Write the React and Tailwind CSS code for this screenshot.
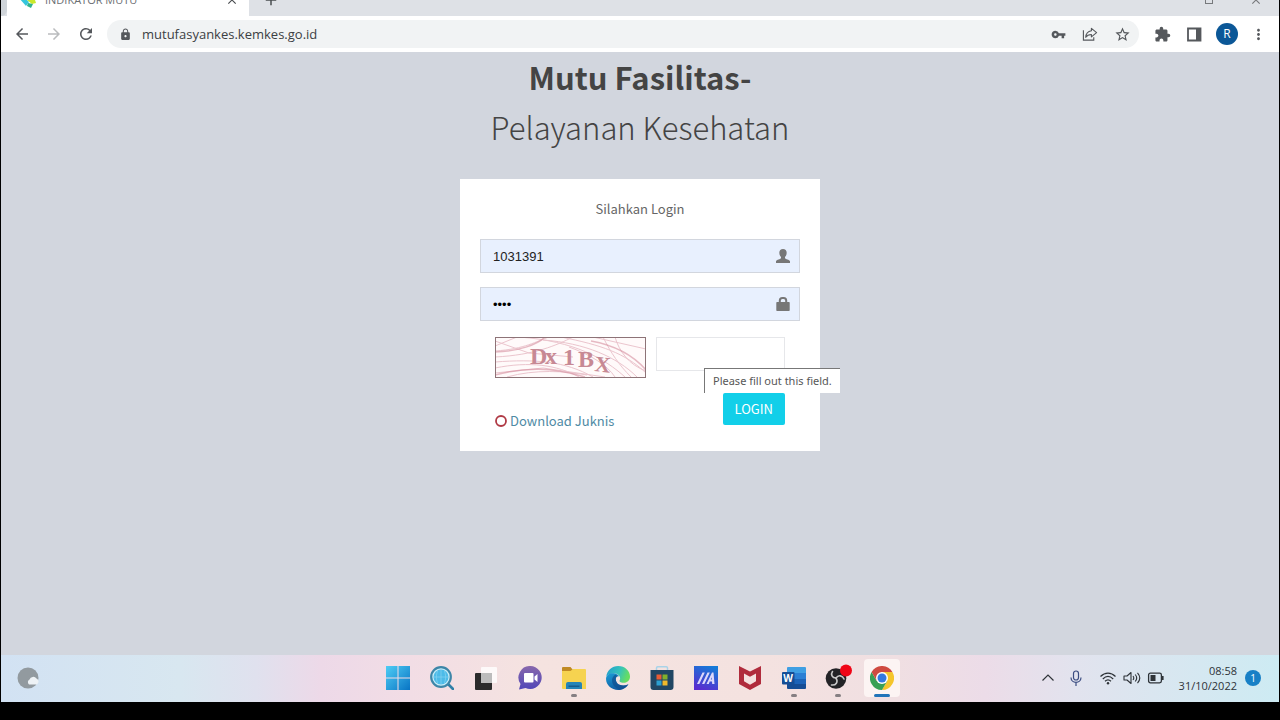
import React from "react";
import {
  MdAdd,
  MdArrowBack,
  MdArrowForward,
  MdClose,
  MdExtension,
  MdLock,
  MdMoreVert,
  MdRefresh,
  MdStarBorder,
  MdVpnKey,
} from "react-icons/md";

const TabStrip = () => (
  <div className="flex h-4 items-end overflow-hidden bg-[#dee1e6] font-['Open_Sans',sans-serif]">
    <div className="h-4 w-1.5 shrink-0 rounded-br-md bg-[#cfd4d9]" />
    <div className="flex h-8 w-[242px] shrink-0 items-center bg-white pl-3 pr-2.5">
      <svg width="18" height="18" viewBox="0 0 18 18" className="shrink-0">
        <path d="M0 7h6l4 4-3 4z" fill="#35c6dc" />
        <path d="M6 3l7-1 4 6-6 2z" fill="#7ed957" />
        <path d="M8 9h8l1 3-4 1z" fill="#c9e82a" />
        <path d="M9 12l5 1-2 4-4-2z" fill="#2fb38d" />
      </svg>
      <span className="ml-2 flex-1 text-[11px] text-[#6b6f73]">INDIKATOR MUTU</span>
      <button aria-label="Close tab" className="text-[#4a4d50]">
        <MdClose size={14} />
      </button>
    </div>
    <button aria-label="New tab" className="flex h-8 w-11 items-center justify-center text-[#4a4d50]">
      <MdAdd size={18} />
    </button>
    <div className="ml-auto flex h-8 items-center gap-9 pr-4 text-[#77797c]">
      <button aria-label="Maximize" className="size-2 border border-current" />
      <button aria-label="Close window">
        <MdClose size={14} />
      </button>
    </div>
  </div>
);

const Toolbar = () => (
  <div className="flex h-9 items-center bg-white px-3 text-[#55585c]">
    <div className="flex items-center gap-3.5">
      <button aria-label="Back"><MdArrowBack size={18} /></button>
      <button aria-label="Forward" className="text-[#babcbe]"><MdArrowForward size={18} /></button>
      <button aria-label="Reload"><MdRefresh size={18} /></button>
    </div>
    <div className="ml-3 flex h-7 flex-1 items-center rounded-full bg-[#f1f3f4] pl-3 pr-2">
      <MdLock size={13} className="shrink-0" />
      <input
        aria-label="Address"
        defaultValue="mutufasyankes.kemkes.go.id"
        className="ml-2.5 min-w-0 flex-1 bg-transparent pt-px font-['Open_Sans',sans-serif] text-[13px] text-[#3c4043] outline-none"
      />
      <div className="flex items-center gap-4">
        <button aria-label="Passwords"><MdVpnKey size={15} /></button>
        <button aria-label="Share">
          <svg width="16" height="16" viewBox="0 0 17 17" fill="none" stroke="currentColor" strokeWidth="1.2">
            <path d="M1.500 4.500v10.500h11v-3" />
            <path d="M10 2.500l5.500 4.500-5.500 4.500V9C7 9 5.200 10 4 12c.2-4 2.300-6.500 6-7z" strokeLinejoin="round" />
          </svg>
        </button>
        <button aria-label="Bookmark"><MdStarBorder size={17} /></button>
      </div>
    </div>
    <div className="ml-[15px] flex items-center gap-4">
      <button aria-label="Extensions"><MdExtension size={17} /></button>
      <button aria-label="Side panel">
        <svg width="15" height="15" viewBox="0 0 15 15">
          <path d="M1 1.500h12.500v12H1z" fill="none" stroke="currentColor" strokeWidth="1.800" />
          <path d="M9 1h5v13H9z" fill="currentColor" />
        </svg>
      </button>
      <button className="-ml-0.5 flex size-[22px] items-center justify-center rounded-full bg-[#0b5797] font-['Open_Sans',sans-serif] text-xs text-white">
        R
      </button>
    </div>
    <button aria-label="Menu" className="ml-3"><MdMoreVert size={17} /></button>
  </div>
);

const UserGlyph = () => (
  <svg width="14" height="14" viewBox="0 0 14 14" fill="#777">
    <path d="M7 0C4.700 0 3.300 1.400 3.300 3.800c0 1.700.7 3.300 1.700 4.200v1.300C4.800 10.200.4 10.600 0 12.300V14h14v-1.700c-.4-1.700-4.800-2.100-5-3V8c1-.9 1.700-2.500 1.700-4.200C10.700 1.400 9.300 0 7 0z" />
  </svg>
);

const LockGlyph = () => (
  <svg width="14" height="14" viewBox="0 0 14 14">
    <path d="M3.800 6V3.500C3.800 2 4.800 1 6.300 1h1.400c1.500 0 2.500 1 2.500 2.500V6" fill="none" stroke="#777" strokeWidth="2" />
    <path d="M1 5h12a.7.7 0 0 1 .7.7v7.600a.7.7 0 0 1-.7.7H1a.7.7 0 0 1-.7-.7V5.700A.7.7 0 0 1 1 5z" fill="#777" />
  </svg>
);

const captchaLines = [
  "M0 14C30 12 42 4 54 0", "M0 20C40 18 62 8 78 0", "M0 9L22 0", "M0 25C40 22 70 24 98 40",
  "M0 31C35 24 62 28 84 40", "M0 36L48 31L110 40", "M24 0C80 4 110 22 130 40",
  "M48 3C90 6 122 20 142 40", "M66 0C106 8 130 16 151 36", "M98 0L151 12",
  "M108 0C116 16 124 28 136 40", "M120 0C124 14 134 28 151 34", "M0 4L34 16L78 20",
  "M12 40C40 32 70 34 92 38", "M74 10C96 18 112 28 120 40",
];

const Captcha = () => (
  <svg width="151" height="41" viewBox="0 0 151 41" role="img" aria-label="Captcha" className="shrink-0">
    <rect width="151" height="41" fill="#fffafa" />
    <g fill="none" stroke="#dfa3b1" strokeWidth="1" opacity="0.6">
      {captchaLines.map((d) => (
        <path key={d} d={d} />
      ))}
    </g>
    <path d="M0 15C24 14 42 8 50 0M96 4C118 8 138 18 151 33M0 38C30 30 56 30 90 40" fill="none" stroke="#d68d9f" strokeWidth="1.500" opacity="0.6" />
    <g fill="#c78994" fontFamily="'Liberation Serif', serif" fontWeight="bold" fontSize="24">
      <text x="35" y="27">D</text>
      <text x="50" y="27">x</text>
      <text x="68" y="28">1</text>
      <text x="83" y="30">B</text>
      <text x="99" y="34" fontSize="22" transform="rotate(6 99 34)">X</text>
    </g>
    <rect x="0.5" y="0.5" width="150" height="40" fill="none" stroke="#8d7377" />
  </svg>
);

const LoginPage = () => (
  <main className="flex flex-1 flex-col items-center bg-[#d2d6de] font-['Noto_Sans_CJK_SC',sans-serif] text-[#444]">
    <h1 className="text-center text-[31px] leading-[50px]">
      <b className="font-bold">Mutu Fasilitas-</b>
      <br />
      <span className="font-light">Pelayanan Kesehatan</span>
    </h1>
    <form
      className="mt-[27px] w-[360px] bg-white p-5"
      onSubmit={(e) => e.preventDefault()}
    >
      <p className="mb-5 text-center text-[13px] leading-5 text-[#666]">Silahkan Login</p>
      <div className="relative mb-3.5">
        <input
          type="text"
          aria-label="Username"
          defaultValue="1031391"
          className="h-[34px] w-full border border-[#d2d6de] bg-[#e8f0fe] px-3 font-['Liberation_Sans',sans-serif] text-[13px] text-[#222] outline-none"
        />
        <span className="absolute right-2.5 top-2.5"><UserGlyph /></span>
      </div>
      <div className="relative mb-4">
        <input
          type="password"
          aria-label="Password"
          defaultValue="1234"
          className="h-[34px] w-full border border-[#d2d6de] bg-[#e8f0fe] px-3 font-['Liberation_Sans',sans-serif] text-[13px] text-black outline-none"
        />
        <span className="absolute right-2.5 top-2.5"><LockGlyph /></span>
      </div>
      <div className="relative flex items-start gap-2.5 px-[15px]">
        <Captcha />
        <input
          type="text"
          aria-label="Captcha code"
          required
          className="h-[34px] min-w-0 flex-1 border border-[#e6e7ea] bg-white px-3 text-[13px] outline-none"
        />
        <div
          role="tooltip"
          className="absolute left-[224px] top-[31px] h-[25px] whitespace-nowrap border-l border-t border-[#777] bg-white px-2 text-[11px] leading-6 text-[#575757] font-['Noto_Sans',sans-serif]"
        >
          Please fill out this field.
        </div>
      </div>
      <div className="mt-[15px] flex items-start justify-between px-[15px]">
        <a href="#juknis" className="mt-[18px] flex items-center gap-[3px] text-[13px] leading-5 text-[#4f8ba5]">
          <svg width="12" height="12" viewBox="0 0 12 12">
            <circle cx="6" cy="6" r="5" fill="none" stroke="#b03a45" strokeWidth="1.800" />
          </svg>
          Download Juknis
        </a>
        <button type="submit" className="h-8 rounded-xs bg-[#12cfe9] px-3 text-[13px] leading-7 text-white">
          LOGIN
        </button>
      </div>
    </form>
  </main>
);

const WindowsIcon = () => (
  <svg width="24" height="24" viewBox="0 0 24 24">
    <defs>
      <linearGradient id="win" gradientUnits="userSpaceOnUse" x1="0" y1="0" x2="24" y2="24">
        <stop offset="0" stopColor="#4fcdf5" />
        <stop offset="1" stopColor="#0874c4" />
      </linearGradient>
    </defs>
    <path d="M0 0h11.500v11.500H0zM12.500 0H24v11.500H12.500zM0 12.500h11.500V24H0zM12.500 12.500H24V24H12.500z" fill="url(#win)" />
  </svg>
);

const SearchIcon = () => (
  <svg width="24" height="24" viewBox="0 0 24 24">
    <path d="M18 18l5 5" stroke="#2f80a8" strokeWidth="2.600" strokeLinecap="round" />
    <circle cx="11" cy="11" r="9.800" fill="#c9edf8" stroke="#3d86a8" strokeWidth="2.200" />
    <circle cx="11" cy="11" r="7.500" fill="#4dbbe8" />
    <path d="M4 11h14M11 4v14M7.500 5c-1.500 4-1.500 8 0 12M14.500 5c1.500 4 1.500 8 0 12" stroke="#84d3f0" strokeWidth="0.700" fill="none" />
  </svg>
);

const TaskViewIcon = () => (
  <svg width="24" height="24" viewBox="0 0 24 24">
    <rect x="1" y="7" width="17" height="17" rx="1" fill="#2b2b2b" />
    <rect x="7" y="1" width="16" height="16" rx="1" fill="#fff" opacity="0.8" />
    <path d="M7 7h11v10H7z" fill="#bcbcbc" />
  </svg>
);

const ChatIcon = () => (
  <svg width="24" height="24" viewBox="0 0 24 24">
    <defs>
      <linearGradient id="chat" x1="0" y1="0" x2="0" y2="1">
        <stop offset="0" stopColor="#8868ac" />
        <stop offset="1" stopColor="#5046b8" />
      </linearGradient>
    </defs>
    <path d="M12.500 0a11.500 11.500 0 1 1-5 22L1 23.500 2.500 18A11.500 11.500 0 0 1 12.500 0z" fill="url(#chat)" />
    <rect x="6" y="7" width="9.500" height="9.500" rx="1" fill="#fff" />
    <path d="M16.500 10.500L19.500 8v8l-3-2.500z" fill="#fff" />
  </svg>
);

const FolderIcon = () => (
  <svg width="24" height="24" viewBox="0 0 24 24">
    <path d="M0 2a1 1 0 0 1 1-1h7.500L11 4v2H0z" fill="#c08a24" />
    <path d="M0 5h8.500l2.500-2h12a1 1 0 0 1 1 1v19H1a1 1 0 0 1-1-1z" fill="#f6d350" />
    <path d="M4 23v-5a2 2 0 0 1 2-2h12a2 2 0 0 1 2 2v5z" fill="#2484b8" />
    <path d="M6.500 19.500h11v1.500h-11z" fill="#155a8c" />
  </svg>
);

const EdgeIcon = () => (
  <svg width="24" height="24" viewBox="0 0 24 24">
    <defs>
      <linearGradient id="edgeTop" x1="0" y1="0" x2="1" y2="0.3">
        <stop offset="0" stopColor="#209bcf" />
        <stop offset="0.6" stopColor="#35c3bb" />
        <stop offset="1" stopColor="#66dd62" />
      </linearGradient>
      <linearGradient id="edgeLow" x1="0" y1="0" x2="0.6" y2="1">
        <stop offset="0" stopColor="#1b9fd8" />
        <stop offset="1" stopColor="#10559c" />
      </linearGradient>
    </defs>
    <path d="M.3 10.500C1 4.500 6 0 12.200 0 19 0 24 5 24 10.500c0 4-3 6.300-6.500 6.300-3 0-4.600-1.400-3.800-2.600C15 12 13.500 8 9 7.500 5.500 7 1.700 8 .3 10.500z" fill="url(#edgeTop)" />
    <path d="M.1 12C.6 8.500 4.500 6.500 9 7.500c2.200.5 3.500 1.600 4.200 3-1.700-.8-3.400.3-3.400 2.700 0 2.500 1.400 4.600 3.700 5.600 3 1.300 6.200.9 9-.6C20.300 21.900 16.400 24 12.200 24 5 24-.6 18.300.1 12z" fill="url(#edgeLow)" />
    <path d="M9.500 8.500c-2.700 1.600-4 4.300-3.300 7.500.8 3.900 4.200 6.800 8.300 7.300 3-.6 5.900-2.500 7.800-5.100-2.800 1.500-6 1.900-8.800.6-2.300-1-3.700-3.100-3.700-5.600 0-1.800.7-2.700 1.700-3z" fill="#114f8e" opacity="0.7" />
  </svg>
);

const StoreIcon = () => (
  <svg width="24" height="24" viewBox="0 0 24 24">
    <path d="M6.500 5V2A1.200 1.200 0 0 1 7.700.8h8.600A1.200 1.200 0 0 1 17.500 2v3" fill="none" stroke="#a9d3e8" strokeWidth="1.500" />
    <path d="M.5 4h23v17a3 3 0 0 1-3 3h-17a3 3 0 0 1-3-3z" fill="#214663" />
    <path d="M6.500 8.500h5v5h-5z" fill="#e85c35" />
    <path d="M12.500 8.500h5v5h-5z" fill="#82b02c" />
    <path d="M6.500 14.500h5v5h-5z" fill="#2c9fd0" />
    <path d="M12.500 14.500h5v5h-5z" fill="#f0b92b" />
  </svg>
);

const MyAsusIcon = () => (
  <svg width="24" height="24" viewBox="0 0 24 24">
    <defs>
      <linearGradient id="asus" x1="0.300" y1="1" x2="0.700" y2="0">
        <stop offset="0" stopColor="#5a2bcf" />
        <stop offset="1" stopColor="#157bd8" />
      </linearGradient>
    </defs>
    <path d="M0 0h24v24H0z" fill="url(#asus)" />
    <path d="M3 18L8.500 6.500h2.300L5.300 18zM8 18l5.500-11.500h2.300L10.300 18zM12.500 18L18 6.500h1.500l1 11.500h-2.300l-.2-2.500h-2.300L14.800 18zM16.800 13.500h1.100l-.2-2.300z" fill="#dcd8fa" fillRule="evenodd" />
  </svg>
);

const McAfeeIcon = () => (
  <svg width="24" height="24" viewBox="0 0 24 24">
    <path d="M1 0l11 5.500L23 0v18l-11 6-11-6zM6 7.500v7.700l6 3.500 6-3.500V7.500l-6 3.300z" fill="#b02c3c" fillRule="evenodd" />
  </svg>
);

const WordIcon = () => (
  <svg width="24" height="24" viewBox="0 0 24 24">
    <path d="M5 2a1 1 0 0 1 1-1h17a1 1 0 0 1 1 1v5H5z" fill="#3f9fe3" />
    <path d="M5 7h19v6H5z" fill="#2b7fd4" />
    <path d="M5 13h19v5H5z" fill="#1c63b8" />
    <path d="M5 18h19v4a1 1 0 0 1-1 1H6a1 1 0 0 1-1-1z" fill="#164d95" />
    <rect y="6" width="12.500" height="12.500" rx="1" fill="#154e96" />
    <text x="6" y="16" textAnchor="middle" fill="#fff" fontSize="10" fontWeight="bold" fontFamily="'Open Sans', sans-serif">W</text>
  </svg>
);

const ObsIcon = () => (
  <svg width="28" height="28" viewBox="0 0 28 28">
    <circle cx="12" cy="14.500" r="10.300" fill="#232326" />
    <g fill="none" stroke="#c9c9c9" strokeWidth="1.600" strokeLinecap="round">
      <path d="M12 14C8 14 6.500 10.500 8.500 7.500" />
      <path d="M12 14c2.500-3.500 6.500-2.500 8 1" />
      <path d="M12 14c2.500 4 0 7.500-4.500 7" />
    </g>
    <circle cx="22" cy="6.500" r="6" fill="#f00516" />
  </svg>
);

const ChromeIcon = () => (
  <svg width="24" height="24" viewBox="0 0 24 24">
    <path d="M12 12V6h10.400A12 12 0 0 1 12 24l5.200-9z" fill="#f5c52b" />
    <path d="M12 12l5.200 3L12 24A12 12 0 0 1 1.600 6l5.200 9z" fill="#38a055" />
    <path d="M1.600 6A12 12 0 0 1 22.400 6H12l-5.200 9z" fill="#cf4a40" />
    <circle cx="12" cy="12" r="6" fill="#fff" />
    <circle cx="12" cy="12" r="4.500" fill="#3379e0" />
  </svg>
);

const apps = [
  { name: "Start", Icon: WindowsIcon },
  { name: "Search", Icon: SearchIcon },
  { name: "Task view", Icon: TaskViewIcon },
  { name: "Chat", Icon: ChatIcon },
  { name: "File Explorer", Icon: FolderIcon, running: true },
  { name: "Edge", Icon: EdgeIcon },
  { name: "Store", Icon: StoreIcon },
  { name: "MyASUS", Icon: MyAsusIcon },
  { name: "McAfee", Icon: McAfeeIcon },
  { name: "Word", Icon: WordIcon, running: true },
  { name: "OBS", Icon: ObsIcon, running: true },
  { name: "Chrome", Icon: ChromeIcon, active: true },
];

const Tray = () => (
  <div className="flex items-center justify-end pr-[18px] text-[#2e3338]">
    <button aria-label="Show hidden icons">
      <svg width="14" height="14" viewBox="0 0 14 14" fill="none" stroke="currentColor" strokeWidth="1.200">
        <path d="M1.500 9.500L7 4l5.500 5.500" />
      </svg>
    </button>
    <svg width="14" height="16" viewBox="0 0 14 16" fill="none" stroke="#3b4c80" strokeWidth="1.200" className="ml-3.5">
      <rect x="4.500" y="1" width="5" height="9" rx="2.500" />
      <path d="M2 7.500c0 6.500 10 6.500 10 0M7 12.500V16" />
    </svg>
    <svg width="18" height="16" viewBox="0 0 18 16" fill="none" stroke="currentColor" strokeWidth="1.200" className="ml-4">
      <path d="M1.500 6.500c4.500-4.500 10.500-4.500 15 0M3.800 9c3.200-3.200 7.200-3.200 10.400 0M6 11.300c2-1.900 4-1.900 6 0" />
      <circle cx="9" cy="13.200" r="1.200" fill="currentColor" stroke="none" />
    </svg>
    <svg width="18" height="16" viewBox="0 0 18 16" fill="none" stroke="currentColor" strokeWidth="1.100" className="ml-1.5">
      <path d="M1 6h3l4-3.500v11L4 10H1z" strokeLinejoin="round" />
      <path d="M10 6c1 1.300 1 2.700 0 4M12.200 4.500c2 2.300 2 4.700 0 7M14.500 2.800c3 3.400 3 7 0 10.400" />
    </svg>
    <svg width="18" height="14" viewBox="0 0 18 14" className="ml-1.5">
      <rect x="1.600" y="2.100" width="12.800" height="9.800" rx="1.800" fill="none" stroke="currentColor" strokeWidth="1.300" />
      <path d="M3.500 4h5v6h-5zM15 5h1.600v4H15z" fill="currentColor" />
    </svg>
    <div className="ml-3.5 text-right font-['Open_Sans',sans-serif] text-[11px] leading-[15px]">
      <p>08:58</p>
      <p>31/10/2022</p>
    </div>
    <span className="ml-2 flex size-4 items-center justify-center rounded-full bg-[#1880c6] font-['Open_Sans',sans-serif] text-[10px] text-white">
      1
    </span>
  </div>
);

const Taskbar = () => (
  <footer className="grid h-[47px] grid-cols-[1fr_auto_1fr] items-center bg-[linear-gradient(to_right,#d2e2f3_0%,#d8e7f0_14%,#e0e1ee_20%,#edd9e8_25%,#f2dde5_32%,#f5e3e0_42%,#f4e2e0_60%,#f0dfe2_70%,#ecdce8_77%,#e2e3ee_84%,#cdebf3_100%)] pb-px">
    <div className="pl-4">
      <svg width="24" height="24" viewBox="0 0 24 24">
        <circle cx="11" cy="12" r="10.500" fill="#929a9f" />
        <path d="M12 18.500a3 3 0 0 1 .5-5 4 4 0 0 1 7-1 3.200 3.200 0 0 1 0 6z" fill="#eef2f5" />
      </svg>
    </div>
    <nav className="flex h-full">
      {apps.map(({ name, Icon, running, active }) => (
        <button key={name} aria-label={name} className="relative flex w-11 items-center justify-center">
          {active && <span className="absolute inset-x-1 inset-y-1 rounded-sm bg-[#fcf4f3]" />}
          <span className="relative"><Icon /></span>
          {running && <span className="absolute bottom-1 h-[3px] w-1.5 rounded-full bg-[#857f82]" />}
          {active && <span className="absolute bottom-1 h-[3px] w-4 rounded-full bg-[#2174b9]" />}
        </button>
      ))}
    </nav>
    <Tray />
  </footer>
);

export default function App() {
  return (
    <div className="flex min-h-screen flex-col bg-black px-px pb-[18px]">
      <TabStrip />
      <Toolbar />
      <LoginPage />
      <Taskbar />
    </div>
  );
}
